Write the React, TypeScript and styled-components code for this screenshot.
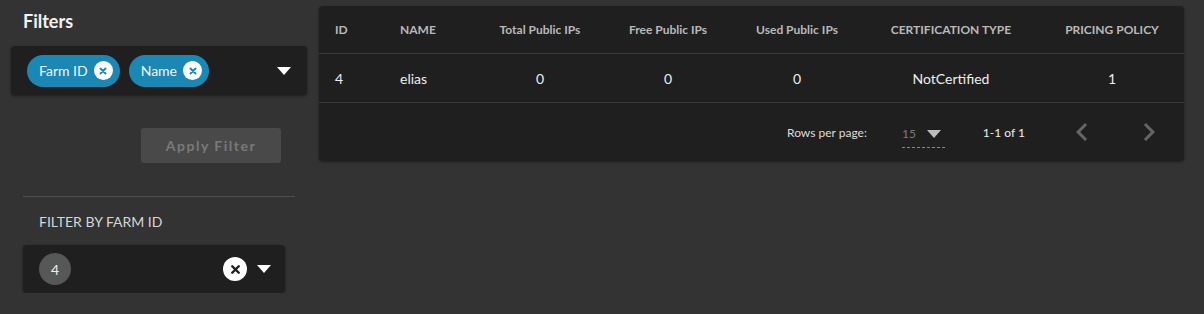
import React from "react";
import styled, { createGlobalStyle } from "styled-components";

const GlobalStyle = createGlobalStyle`
  html, body {
    margin: 0;
    background: #333333;
    font-family: Lato, "Liberation Sans", sans-serif;
    color: #eeeeee;
  }
`;

const Page = styled.div`
  display: flex;
  align-items: flex-start;
  gap: 12px;
  padding: 6px 20px 0 11px;
`;

const Sidebar = styled.aside`
  width: 296px;
  flex-shrink: 0;
  display: flex;
  flex-direction: column;
`;

const Title = styled.h2`
  margin: 4px 0 0 12px;
  font-size: 18px;
  font-weight: 700;
  line-height: 22px;
  color: #f2f2f2;
`;

const SelectBox = styled.div<{ $width?: number; $height: number }>`
  display: flex;
  align-items: center;
  box-sizing: border-box;
  width: ${(p) => (p.$width ? `${p.$width}px` : "100%")};
  height: ${(p) => p.$height}px;
  padding: 0 16px;
  background: #1f1f1f;
  border-radius: 4px;
  box-shadow: 0 1px 3px rgba(0, 0, 0, 0.45);
`;

const FilterSelect = styled(SelectBox)`
  margin-top: 14px;
`;

const Chips = styled.div`
  display: flex;
  gap: 9px;
  flex: 1;
  align-items: center;
`;

const Chip = styled.span`
  display: inline-flex;
  align-items: center;
  gap: 6px;
  height: 32px;
  padding: 0 7px 0 12px;
  border-radius: 16px;
  background: #1a87b5;
  color: #f4f4f4;
  font-size: 14px;
`;

const ChipX = styled.span<{ $size: number }>`
  display: inline-flex;
  align-items: center;
  justify-content: center;
  width: ${(p) => p.$size}px;
  height: ${(p) => p.$size}px;
  border-radius: 50%;
  background: #ffffff;
`;

const Caret = styled.span<{ $color?: string }>`
  width: 0;
  height: 0;
  border-left: 7px solid transparent;
  border-right: 7px solid transparent;
  border-top: 8px solid ${(p) => p.$color || "#ffffff"};
`;

const ButtonRow = styled.div`
  display: flex;
  justify-content: flex-end;
  padding-right: 26px;
  margin-top: 33px;
`;

const ApplyButton = styled.button`
  width: 140px;
  height: 35px;
  border: none;
  border-radius: 3px;
  background: #494949;
  color: #797979;
  font-family: inherit;
  font-size: 14px;
  font-weight: 700;
  letter-spacing: 1.5px;
`;

const Divider = styled.hr`
  margin: 33px 12px 0 12px;
  border: none;
  border-top: 1px solid #4e4e4e;
`;

const Label = styled.div`
  margin: 16px 0 0 28px;
  font-size: 14px;
  line-height: 18px;
  color: #d6d6d6;
`;

const FarmField = styled.div`
  margin: 14px 0 0 12px;
`;

const FarmChip = styled.span`
  display: inline-flex;
  align-items: center;
  justify-content: center;
  width: 32px;
  height: 32px;
  border-radius: 50%;
  background: #575757;
  color: #eeeeee;
  font-size: 14px;
`;

const Spacer = styled.div`
  flex: 1;
`;

const FieldIcons = styled.div`
  display: flex;
  align-items: center;
  gap: 10px;
  margin-right: -2px;
`;

const TablePanel = styled.section`
  flex: 1;
  background: #1f1f1f;
  border-radius: 4px;
  box-shadow: 0 1px 3px rgba(0, 0, 0, 0.4);
`;

const Row = styled.div<{ $height: number }>`
  display: grid;
  grid-template-columns: 65px 92px 128px 128px 130px 178px 1fr;
  align-items: center;
  height: ${(p) => p.$height}px;
  border-bottom: 1px solid #3a3a3a;
`;

const HeadCell = styled.div<{ $center?: boolean }>`
  padding-left: ${(p) => (p.$center ? 0 : 16)}px;
  text-align: ${(p) => (p.$center ? "center" : "left")};
  font-size: 12px;
  font-weight: 700;
  color: #b9b9b9;
`;

const Cell = styled.div<{ $center?: boolean }>`
  padding-left: ${(p) => (p.$center ? 0 : 16)}px;
  text-align: ${(p) => (p.$center ? "center" : "left")};
  font-size: 14px;
  color: #eeeeee;
`;

const Footer = styled.div`
  display: flex;
  align-items: center;
  height: 58px;
  padding-left: 468px;
  font-size: 12px;
`;

const RowsLabel = styled.span`
  color: #dddddd;
`;

const PerPage = styled.div`
  display: flex;
  align-items: center;
  gap: 11px;
  margin-left: 35px;
  padding: 2px 4px 6px 0;
  border-bottom: 1px dashed #888888;
  color: #7a7a7a;
  position: relative;
  top: 4px;
`;

const Range = styled.span`
  margin-left: 38px;
  color: #eeeeee;
`;

const NavButton = styled.span<{ $gap: number }>`
  display: inline-flex;
  margin-left: ${(p) => p.$gap}px;
`;

const XMark = ({ size, color }: { size: number; color: string }) => (
  <svg width={size} height={size} viewBox="0 0 10 10">
    <path d="M2.5 2.5 L7.5 7.5 M7.5 2.5 L2.5 7.5" stroke={color} strokeWidth="1.9" strokeLinecap="round" />
  </svg>
);

const Chevron = ({ dir }: { dir: "left" | "right" }) => (
  <svg width="36" height="36" viewBox="0 0 24 24">
    <path
      d={dir === "left" ? "M15.4 7.4 14 6l-6 6 6 6 1.4-1.4L10.8 12z" : "M8.6 16.6 10 18l6-6-6-6-1.4 1.4 4.6 4.6z"}
      fill="#656565"
    />
  </svg>
);

const headers = ["ID", "NAME", "Total Public IPs", "Free Public IPs", "Used Public IPs", "CERTIFICATION TYPE", "PRICING POLICY"];
const farm = ["4", "elias", "0", "0", "0", "NotCertified", "1"];

export default function App() {
  return (
    <>
      <GlobalStyle />
      <Page>
        <Sidebar>
          <Title>Filters</Title>
          <FilterSelect $height={49}>
            <Chips>
              <Chip>
                Farm ID
                <ChipX $size={19}>
                  <XMark size={10} color="#1a87b5" />
                </ChipX>
              </Chip>
              <Chip>
                Name
                <ChipX $size={19}>
                  <XMark size={10} color="#1a87b5" />
                </ChipX>
              </Chip>
            </Chips>
            <Caret />
          </FilterSelect>
          <ButtonRow>
            <ApplyButton>Apply Filter</ApplyButton>
          </ButtonRow>
          <Divider />
          <Label>FILTER BY FARM ID</Label>
          <FarmField>
            <SelectBox $width={262} $height={48}>
              <FarmChip>4</FarmChip>
              <Spacer />
              <FieldIcons>
                <ChipX $size={24}>
                  <XMark size={13} color="#1f1f1f" />
                </ChipX>
                <Caret />
              </FieldIcons>
            </SelectBox>
          </FarmField>
        </Sidebar>
        <TablePanel>
          <Row $height={47}>
            {headers.map((h, i) => (
              <HeadCell key={h} $center={i > 1}>
                {h}
              </HeadCell>
            ))}
          </Row>
          <Row $height={48}>
            {farm.map((v, i) => (
              <Cell key={i} $center={i > 1}>
                {v}
              </Cell>
            ))}
          </Row>
          <Footer>
            <RowsLabel>Rows per page:</RowsLabel>
            <PerPage>
              15
              <Caret $color="#bdbdbd" />
            </PerPage>
            <Range>1-1 of 1</Range>
            <NavButton $gap={39}>
              <Chevron dir="left" />
            </NavButton>
            <NavButton $gap={31}>
              <Chevron dir="right" />
            </NavButton>
          </Footer>
        </TablePanel>
      </Page>
    </>
  );
}
